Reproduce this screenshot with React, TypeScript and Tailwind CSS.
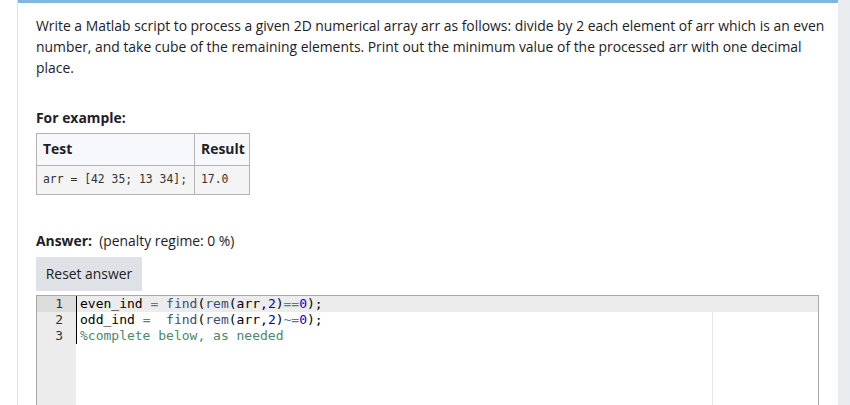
import React from 'react';

const sans = { fontFamily: '"Open Sans", "Noto Sans", sans-serif' };
const mono = { fontFamily: '"DejaVu Sans Mono", monospace' };

function CodeLine({ children, active }: { children: React.ReactNode; active?: boolean }) {
  return (
    <div className={`h-4 leading-4 whitespace-pre pl-[3px] ${active ? 'bg-[#ececec]' : ''}`}>{children}</div>
  );
}

export default function App() {
  const op = 'text-[#687687]';
  const fn = 'text-[#3c4c72]';
  const num = 'text-[#0000cd]';

  return (
    <div className="flex w-[850px] h-[405px] overflow-hidden bg-white text-[#1d2125]" style={sans}>
      <div className="w-[17px] shrink-0" />
      <div className="w-px shrink-0 bg-[#dee2e6]" />
      <div className="w-[820px] shrink-0 border-t-[3px] border-[#83b5de] pl-[18px] pr-[19px] pt-[12px]">
        <p className="text-[13.9px] leading-[21px] whitespace-nowrap">
          Write a Matlab script to process a given 2D numerical array arr as follows: divide by 2 each element of arr which is an even
          <br />
          number, and take cube of the remaining elements. Print out the minimum value of the processed arr with one decimal
          <br />
          place.
        </p>

        <h4 className="mt-[29px] text-[13.9px] leading-[21px] font-bold">For example:</h4>

        <table className="mt-[5px] border-collapse text-[13.9px]">
          <thead>
            <tr className="bg-[#f7f8fc] h-[32px]">
              <th className="border border-[#b3b3b3] text-left font-bold pl-[6px] pr-[4px] w-[158px]">Test</th>
              <th className="border border-[#b3b3b3] text-left font-bold pl-[6px] pr-[4px]">Result</th>
            </tr>
          </thead>
          <tbody>
            <tr className="bg-[#f4f4f4] h-[29px] text-[11.4px] text-[#333]" style={mono}>
              <td className="border border-[#b3b3b3] pl-[6px] whitespace-pre">arr = [42 35; 13 34];</td>
              <td className="border border-[#b3b3b3] pl-[6px]">17.0</td>
            </tr>
          </tbody>
        </table>

        <div className="mt-[35px] text-[13.9px] leading-[21px]">
          <span className="font-bold">Answer:</span>
          <span>&nbsp; (penalty regime: 0 %)</span>
        </div>

        <button className="mt-[6px] h-[34px] w-[106px] bg-[#dee2e6] text-[13.9px] text-[#1d2125]" style={sans}>
          Reset answer
        </button>

        <div className="mt-[4px] flex h-[200px] w-[783px] border-t border-x border-[#a8a8a8] text-[13px]" style={mono}>
          <div className="w-[39px] shrink-0 bg-[#ececec] text-[#333] text-right pr-[13px]">
            <div className="h-4 leading-4 bg-[#dcdcdc] -mr-[13px] pr-[13px]">1</div>
            <div className="h-4 leading-4">2</div>
            <div className="h-4 leading-4">3</div>
          </div>
          <div className="relative flex-1 text-black">
            <div className="absolute left-[636px] top-0 bottom-0 w-px bg-[#e6e6e6]" />
            <div className="relative border-l border-black">
              <CodeLine active>
                even_ind <span className={op}>=</span> <span className={fn}>find</span>(<span className={fn}>rem</span>(arr,<span className={num}>2</span>)<span className={op}>==</span><span className={num}>0</span>);
              </CodeLine>
              <CodeLine>
                odd_ind <span className={op}>=</span>  <span className={fn}>find</span>(<span className={fn}>rem</span>(arr,<span className={num}>2</span>)<span className={op}>~=</span><span className={num}>0</span>);
              </CodeLine>
              <CodeLine>
                <span className="text-[#4c886b]">%complete below, as needed</span>
              </CodeLine>
            </div>
          </div>
        </div>
      </div>
      <div className="flex-1 bg-[#e9ecef]" />
    </div>
  );
}
